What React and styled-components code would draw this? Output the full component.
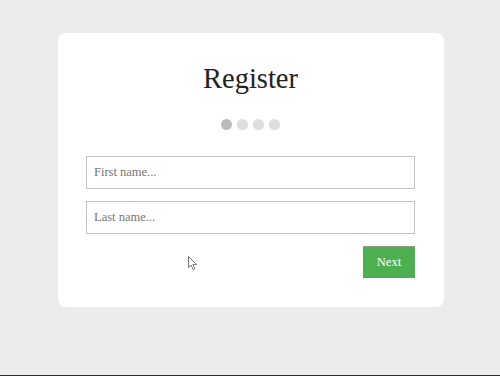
import React from "react";
import styled, { createGlobalStyle } from "styled-components";

const GlobalStyle = createGlobalStyle`
  html, body {
    margin: 0;
    padding: 0;
    background: #ececec;
    font-family: "Liberation Serif", "Times New Roman", serif;
  }
`;

const Page = styled.div`
  position: relative;
  box-sizing: border-box;
  height: 376px;
  padding-top: 33px;
  border-bottom: 1px solid #2b2b2b;
`;

const Card = styled.form`
  box-sizing: border-box;
  width: 386px;
  margin-left: 58px;
  padding: 30px 29px 29px 28px;
  background: #ffffff;
  border-radius: 8px;
  display: flex;
  flex-direction: column;
`;

const Title = styled.h1`
  margin: 0;
  font-size: 28.5px;
  line-height: 32px;
  font-weight: normal;
  text-align: center;
  color: #222222;
`;

const Steps = styled.div`
  display: flex;
  justify-content: center;
  gap: 5px;
  margin: 24px 0 26px;
`;

const Step = styled.span`
  width: 11px;
  height: 11px;
  border-radius: 50%;
  background: #bbbbbb;
  opacity: ${(p) => (p.$active ? 1 : 0.5)};
`;

const Field = styled.input`
  box-sizing: border-box;
  width: 100%;
  height: 33px;
  margin: 0 0 12px;
  padding: 0 7px;
  border: 1px solid #c2c2c2;
  font-family: "Liberation Serif", "Times New Roman", serif;
  font-size: 12.5px;
  color: #333;
  outline: none;
  &::placeholder {
    color: #767676;
  }
`;

const Actions = styled.div`
  display: flex;
  justify-content: flex-end;
`;

const Button = styled.button`
  box-sizing: border-box;
  width: 52px;
  height: 32px;
  border: none;
  border-top: 1px solid #8e9a8e;
  background: #4caf50;
  color: #ffffff;
  font-family: "Liberation Serif", "Times New Roman", serif;
  font-size: 12.5px;
  cursor: pointer;
`;

const Pointer = styled.svg`
  position: absolute;
  left: 188px;
  top: 256px;
`;

export default function App() {
  const steps = [true, false, false, false];
  return (
    <Page>
      <GlobalStyle />
      <Card onSubmit={(e) => e.preventDefault()}>
        <Title>Register</Title>
        <Steps>
          {steps.map((active, i) => (
            <Step key={i} $active={active} />
          ))}
        </Steps>
        <Field placeholder="First name..." />
        <Field placeholder="Last name..." />
        <Actions>
          <Button type="button">Next</Button>
        </Actions>
      </Card>
      <Pointer width="10" height="15" viewBox="0 0 10 15">
        <path
          d="M0.5 0.5 L0.5 11.5 L3 9 L5 13.5 L6.8 12.7 L4.9 8.5 L8.5 8.5 Z"
          fill="#ffffff"
          stroke="#6a6a6a"
          strokeWidth="0.9"
          strokeLinejoin="round"
        />
      </Pointer>
    </Page>
  );
}
